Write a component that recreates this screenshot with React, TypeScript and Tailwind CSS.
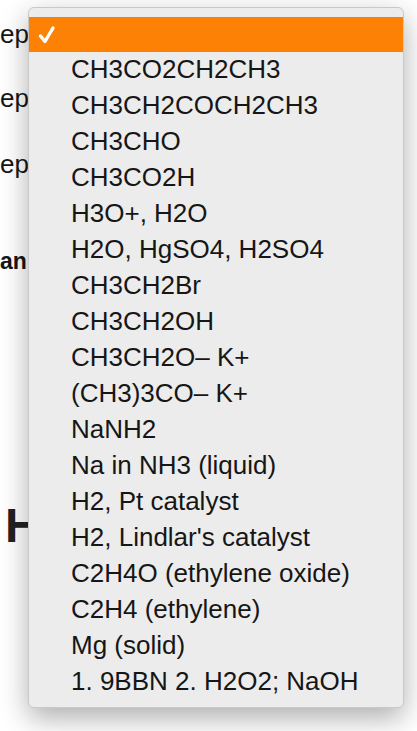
import React from 'react';

const items = [
  'CH3CO2CH2CH3',
  'CH3CH2COCH2CH3',
  'CH3CHO',
  'CH3CO2H',
  'H3O+, H2O',
  'H2O, HgSO4, H2SO4',
  'CH3CH2Br',
  'CH3CH2OH',
  'CH3CH2O– K+',
  '(CH3)3CO– K+',
  'NaNH2',
  'Na in NH3 (liquid)',
  'H2, Pt catalyst',
  "H2, Lindlar's catalyst",
  'C2H4O (ethylene oxide)',
  'C2H4 (ethylene)',
  'Mg (solid)',
  '1. 9BBN 2. H2O2; NaOH',
];

const font = { fontFamily: "'Liberation Sans', Arial, sans-serif" };

const App: React.FC = () => {
  return (
    <div
      className="relative w-[417px] h-[731px] overflow-hidden bg-white text-[#161616]"
      style={font}
    >
      {/* Page behind the menu */}
      <div className="flex flex-col text-[26px] leading-[30px]">
        <div className="mt-[19px]">ep</div>
        <div className="mt-[34px]">ep</div>
        <div className="mt-[36px]">ep</div>
        <div className="mt-[67px] font-bold text-[23px]">an:</div>
        <div className="mt-[222px] pl-[5px] font-bold text-[48px] leading-[56px] text-[#222]">H</div>
      </div>

      {/* Popup menu */}
      <div className="absolute left-[28px] top-[7px] w-[376px] h-[701px] rounded-[6px] bg-[#ececec] border border-[#c9c9c9] shadow-[0_10px_28px_rgba(0,0,0,0.32)] pt-[9px] pb-[8px]">
        <div className="h-[35px] bg-[#fc8104] flex items-center pl-[9px]">
          <svg width="18" height="20" viewBox="0 0 18 20" fill="none">
            <path
              d="M2.5 11 L7 16.5 L15 3"
              stroke="white"
              strokeWidth="3.4"
              strokeLinecap="round"
              strokeLinejoin="round"
            />
          </svg>
        </div>
        {items.map((t) => (
          <div key={t} className="h-[36px] pl-[42px] text-[26px] leading-[34px] whitespace-nowrap">
            {t}
          </div>
        ))}
      </div>
    </div>
  );
};

export default App;
